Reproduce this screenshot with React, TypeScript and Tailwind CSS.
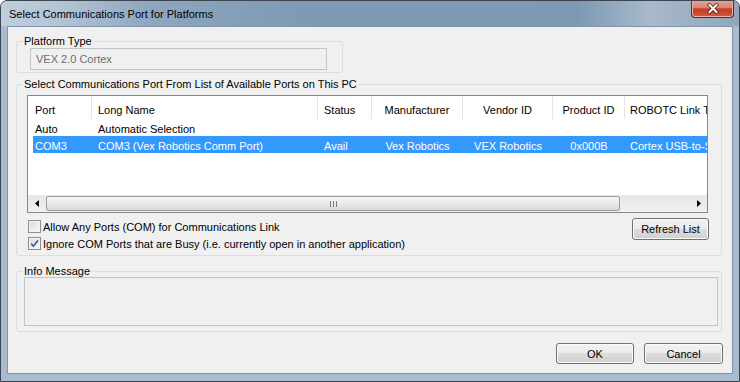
import type { ReactNode } from "react";

type Col = { label: string; head: string; cell: string };

const columns: Col[] = [
  { label: "Port", head: "w-[64px] pl-[7px]", cell: "w-[59px] pl-[2px]" },
  { label: "Long Name", head: "w-[226px] pl-[6px]", cell: "w-[226px] pl-[6px]" },
  { label: "Status", head: "w-[54px] pl-[6px]", cell: "w-[54px] pl-[6px]" },
  { label: "Manufacturer", head: "w-[91px] text-center", cell: "w-[91px] text-center" },
  { label: "Vendor ID", head: "w-[90px] text-center", cell: "w-[90px] text-center" },
  { label: "Product ID", head: "w-[72px] text-center", cell: "w-[72px] text-center" },
  { label: "ROBOTC Link Type", head: "w-[120px] pl-[5px]", cell: "w-[120px] pl-[5px]" },
];

const ports = [
  { cells: ["Auto", "Automatic Selection", "", "", "", "", ""], selected: false },
  {
    cells: ["COM3", "COM3 (Vex Robotics Comm Port)", "Avail", "Vex Robotics", "VEX Robotics", "0x000B", "Cortex USB-to-Serial"],
    selected: true,
  },
];

const btn =
  "flex items-center justify-center rounded-[3px] border border-[#707070] bg-[linear-gradient(#f2f2f2_0%,#ebebeb_50%,#dddddd_50%,#cfcfcf_100%)] shadow-[inset_0_0_0_1px_#fbfbfb] pt-px text-black";

function Group({ label, className, children }: { label: string; className?: string; children: ReactNode }) {
  return (
    <fieldset className={`rounded-[3px] border border-[#d5dfe5] ${className ?? ""}`}>
      <legend className="ml-[6px] px-[1px] text-[11px] leading-[12px] text-black">{label}</legend>
      {children}
    </fieldset>
  );
}

function Checkbox({ label, checked }: { label: string; checked?: boolean }) {
  return (
    <div className="flex h-[17px] items-center gap-[2px]">
      <div className="ml-[1px] flex h-[13px] w-[13px] items-center justify-center border border-[#8e8f8f] bg-[linear-gradient(135deg,#dadada,#fbfbfb)] shadow-[inset_0_0_0_1px_#f2f2f2]">
        {checked && (
          <svg width="11" height="11" viewBox="0 0 11 11">
            <path d="M2.2 5.6 L4.4 8.2 L9 2.4" fill="none" stroke="#4a5f97" strokeWidth="1.7" />
          </svg>
        )}
      </div>
      <span className="pt-[2px] text-[11px] text-black">{label}</span>
    </div>
  );
}

function ScrollBar() {
  return (
    <div className="flex h-[17px] shrink-0 items-center bg-[linear-gradient(#e6e6e6,#f1f1f1)]">
      <div className="flex h-full w-[17px] items-center justify-center">
        <svg width="4" height="7" viewBox="0 0 4 7">
          <path d="M4 0 L0 3.5 L4 7 Z" fill="#000" />
        </svg>
      </div>
      <div className="ml-[1px] flex h-[15px] w-[574px] items-center justify-center gap-[2px] rounded-[2px] border border-[#9c9c9c] bg-[linear-gradient(#f7f7f7,#e9e9e9_50%,#d8d8d8)]">
        <div className="h-[6px] w-px bg-[#7c7c7c]" />
        <div className="h-[6px] w-px bg-[#7c7c7c]" />
        <div className="h-[6px] w-px bg-[#7c7c7c]" />
      </div>
      <div className="ml-auto flex h-full w-[17px] items-center justify-center">
        <svg width="4" height="7" viewBox="0 0 4 7">
          <path d="M0 0 L4 3.5 L0 7 Z" fill="#000" />
        </svg>
      </div>
    </div>
  );
}

function PortList() {
  return (
    <div className="ml-[10px] mt-[5px] flex h-[118px] w-[681px] flex-col overflow-hidden border border-[#828790] bg-white text-[11px]">
      <div className="flex h-[23px] shrink-0">
        {columns.map((c) => (
          <div key={c.label} className={`${c.head} shrink-0 overflow-hidden whitespace-nowrap border-r border-[#e5e5e5] pt-[7px] leading-[15px] text-black`}>
            {c.label}
          </div>
        ))}
      </div>
      <div className="flex-1">
        {ports.map((p) => (
          <div
            key={p.cells[0]}
            className={`ml-[5px] flex h-[17px] pt-[4px] leading-[13px] ${p.selected ? "bg-[#3399ff] text-white" : "text-black"}`}
          >
            {columns.map((c, i) => (
              <div key={c.label} className={`${c.cell} shrink-0 overflow-hidden whitespace-nowrap`}>
                {p.cells[i]}
              </div>
            ))}
          </div>
        ))}
      </div>
      <ScrollBar />
    </div>
  );
}

export default function App() {
  return (
    <div className="flex h-[382px] w-[740px] flex-col overflow-hidden rounded-t-[7px] border border-[#3d4650] bg-[#a9bccf] px-[6px] pb-[7px] font-['Liberation_Sans',Arial,sans-serif]">
      {/* title bar */}
      <div className="-mx-[6px] flex h-[25px] shrink-0 items-start justify-between bg-[linear-gradient(90deg,#bfcedb_0%,#b3c4d4_8%,#8ea7bf_20%,#7f9ab4_40%,#7d99b3_78%,#a8bacb_88%,#8fa6bc_100%)] pl-[7px] pr-[6px]">
        <div className="pl-[1px] pt-[7px] text-[11px] leading-[13px] text-black">Select Communications Port for Platforms</div>
        <div className="-mr-[1px] -mt-px flex h-[18px] w-[43px] items-center justify-center rounded-b-[4px] border border-t-0 border-[#5b2a24] bg-[linear-gradient(#e6a394_0%,#d98572_45%,#c23f2a_52%,#c5432b_70%,#dd5c3d_100%)] shadow-[inset_0_0_0_1px_#eeb0a2]">
          <svg width="12" height="11" viewBox="0 0 12 11" className="-mt-px">
            <path d="M2.5 2 L9.5 9 M9.5 2 L2.5 9" stroke="#4a1e17" strokeWidth="3.6" strokeLinecap="square" />
            <path d="M2.5 2 L9.5 9 M9.5 2 L2.5 9" stroke="#ffffff" strokeWidth="2" strokeLinecap="square" />
          </svg>
        </div>
      </div>

      {/* client area */}
      <div className="flex flex-1 flex-col border border-[#8296ab] bg-[#f0f0f0] pl-[8px] pr-[10px] pt-[8px]">
        <Group label="Platform Type" className="w-[327px] pb-[2px]">
          <div className="ml-[13px] mt-[1px] flex h-[22px] w-[297px] items-center border border-[#c2c6ca] bg-[#f0f0f0] pl-[5px] pt-px text-[11px] text-[#6d6d6d]">
            VEX 2.0 Cortex
          </div>
        </Group>

        <Group label="Select Communications Port From List of Available Ports on This PC" className="mt-[5px] pb-[3px]">
          <PortList />
          <div className="mt-[5px] flex justify-between pl-[10px]">
            <div className="flex flex-col">
              <Checkbox label="Allow Any Ports (COM) for Communications Link" />
              <Checkbox label="Ignore COM Ports that are Busy (i.e. currently open in another application)" checked />
            </div>
            <button className={`${btn} mr-[12px] h-[22px] w-[77px] text-[11px]`}>Refresh List</button>
          </div>
        </Group>

        <Group label="Info Message" className="mt-[9px] pb-[5px]">
          <div className="ml-[7px] mr-[3px] h-[49px] border border-[#c2c6ca] bg-[#f0f0f0]" />
        </Group>

        <div className="-mr-px mt-[11px] flex justify-end gap-[10px]">
          <button className={`${btn} h-[21px] w-[78px] text-[11px]`}>OK</button>
          <button className={`${btn} h-[21px] w-[79px] text-[11px]`}>Cancel</button>
        </div>
      </div>
    </div>
  );
}
